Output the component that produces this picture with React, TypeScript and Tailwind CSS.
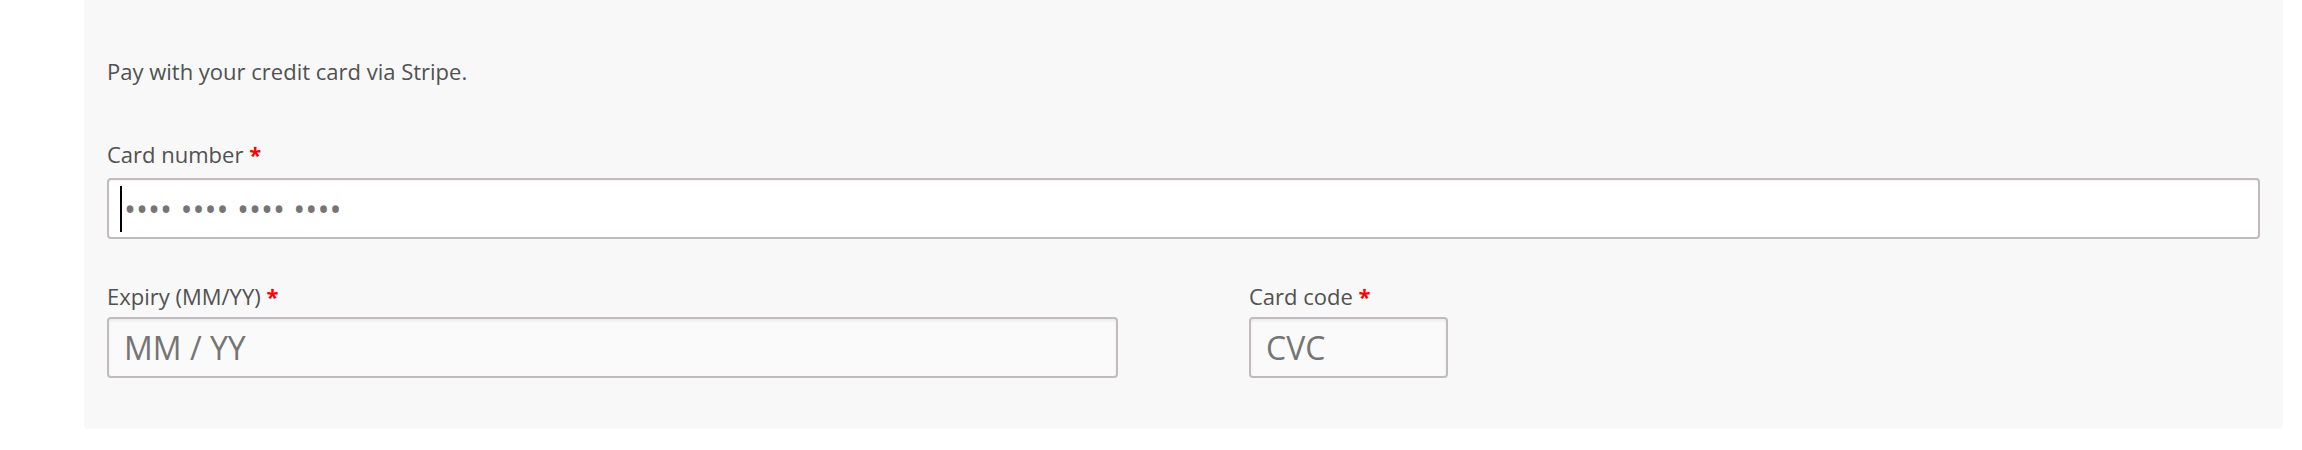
import React from 'react';

const font = { fontFamily: '"Open Sans", "Liberation Sans", sans-serif' };

const Label: React.FC<{ text: string; className?: string }> = ({ text, className }) => (
  <label className={`block text-[22px] leading-[33px] text-[#515151] ${className ?? ''}`}>
    {text} <span className="font-bold text-[#ff0000]">*</span>
  </label>
);

export default function App() {
  return (
    <div className="min-h-[450px] w-full bg-white" style={font}>
      <div className="ml-[84px] mr-[19px] h-[429px] rounded-b-[4px] bg-[#f8f8f8] px-[23px] pt-[55px]">
        <p className="text-[22px] leading-[33px] text-[#515151]">Pay with your credit card via Stripe.</p>

        <Label text="Card number" className="mt-[50px]" />
        <div className="mt-[7px] flex h-[61px] items-center rounded-[4px] border-2 border-[#c1bbc1] bg-white pl-[15px] shadow-[inset_0_1px_2px_rgba(0,0,0,0.06)]">
          <span className="relative flex items-center">
            <span className="absolute left-[-4px] top-1/2 h-[46px] w-[2px] -translate-y-1/2 bg-black" />
            <span className="text-[32px] leading-none text-[#757575]">•••• •••• •••• ••••</span>
          </span>
        </div>

        <div className="mt-[41px] flex">
          <div className="w-[1011px]">
            <Label text="Expiry (MM/YY)" />
            <div className="mt-[4px] flex h-[61px] items-center rounded-[4px] border-2 border-[#c1bbc1] bg-[#fafafa] pl-[15px] text-[32px] text-[#757575] shadow-[inset_0_2px_3px_rgba(0,0,0,0.06)]">
              MM / YY
            </div>
          </div>
          <div className="ml-[131px] w-[199px]">
            <Label text="Card code" />
            <div className="mt-[4px] flex h-[61px] items-center rounded-[4px] border-2 border-[#c1bbc1] bg-[#fafafa] pl-[15px] text-[32px] text-[#757575] shadow-[inset_0_2px_3px_rgba(0,0,0,0.06)]">
              CVC
            </div>
          </div>
        </div>
      </div>
    </div>
  );
}
